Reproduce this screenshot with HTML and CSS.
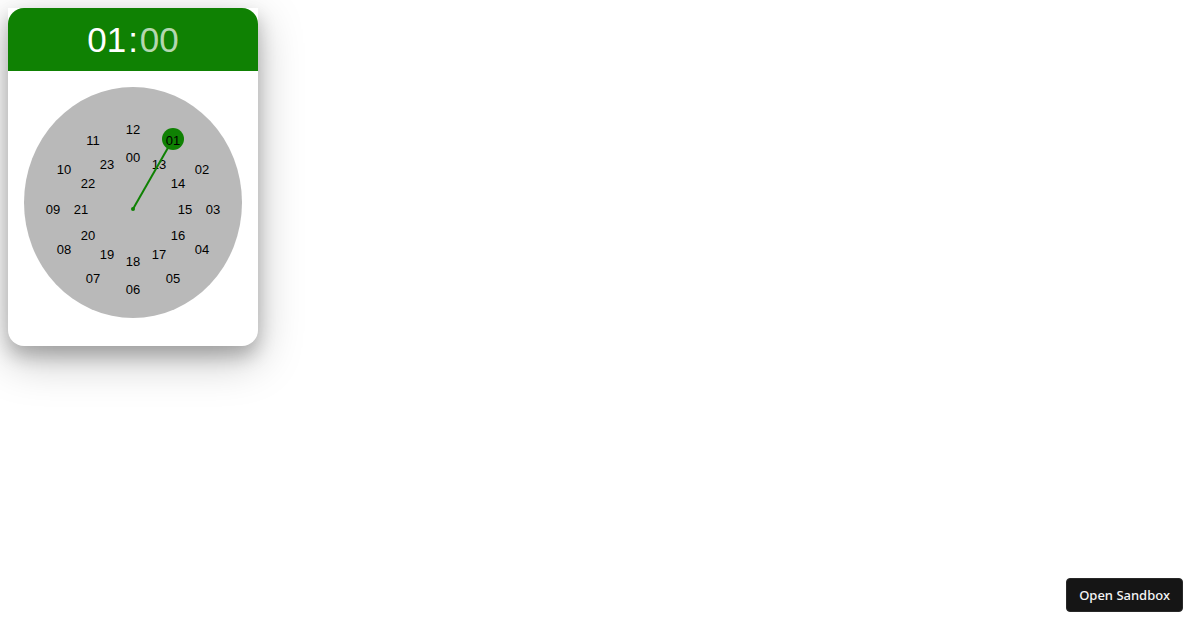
FILE: index.html
```html
<!DOCTYPE html>
<html lang="en">
<head>
<meta charset="utf-8">
<meta name="viewport" content="width=device-width, initial-scale=1">
<title>Time picker</title>
<link rel="stylesheet" href="styles.css">
</head>
<body>
<main class="picker">
  <header class="picker-header">
    <button class="unit" type="button" aria-label="Hours">01</button>
    <span class="colon">:</span>
    <button class="unit unit-idle" type="button" aria-label="Minutes">00</button>
  </header>
  <div class="picker-body">
    <svg class="clock" viewBox="0 0 218 231" role="img" aria-label="Hour dial, 01 selected">
      <ellipse class="face" cx="109" cy="115.5" rx="109" ry="115.5"/>
      <g class="numbers">
        <text x="109" y="47">12</text>
        <text x="178" y="87">02</text>
        <text x="189" y="127">03</text>
        <text x="178" y="167">04</text>
        <text x="149" y="196">05</text>
        <text x="109" y="207">06</text>
        <text x="69" y="196">07</text>
        <text x="40" y="167">08</text>
        <text x="29" y="127">09</text>
        <text x="40" y="87">10</text>
        <text x="69" y="58">11</text>
        <text x="109" y="75">00</text>
        <text x="135" y="82">13</text>
        <text x="154" y="101">14</text>
        <text x="161" y="127">15</text>
        <text x="154" y="153">16</text>
        <text x="135" y="172">17</text>
        <text x="109" y="179">18</text>
        <text x="83" y="172">19</text>
        <text x="64" y="153">20</text>
        <text x="57" y="127">21</text>
        <text x="64" y="101">22</text>
        <text x="83" y="82">23</text>
      </g>
      <line class="hand" x1="109" y1="122" x2="149" y2="52"/>
      <circle class="knob" cx="109" cy="122" r="2"/>
      <circle class="knob" cx="149" cy="52" r="11"/>
      <g class="numbers"><text x="149" y="58">01</text></g>
    </svg>
  </div>
</main>
<a class="sandbox" href="#">Open Sandbox</a>
</body>
</html>
```
FILE: styles.css
```css
* {
  box-sizing: border-box;
}

body {
  min-height: 100vh;
  margin: 0;
  padding: 8px;
  background: #fff;
  font-family: "Liberation Sans", Arial, sans-serif;
}

.picker {
  width: 250px;
  background: #fff;
  border-radius: 0 0 16px 16px;
  box-shadow: 0 14px 45px rgba(0, 0, 0, 0.25), 0 10px 18px rgba(0, 0, 0, 0.22);
}

.picker-header {
  display: flex;
  justify-content: center;
  gap: 2px;
  padding: 12px;
  border-radius: 16px 16px 0 0;
  background: #0f8103;
  color: #fff;
  font-size: 35px;
  line-height: 39px;
}

.unit {
  padding: 0;
  border: 0;
  background: none;
  color: inherit;
  font: inherit;
  cursor: pointer;
}

.unit-idle {
  color: rgba(255, 255, 255, 0.7);
}

.picker-body {
  padding: 16px 16px 28px;
}

.clock {
  display: block;
  width: 100%;
}

.face {
  fill: #b9b9b9;
}

.numbers {
  fill: #000;
  font-size: 13px;
  text-anchor: middle;
}

.hand {
  stroke: #0f8103;
  stroke-width: 2;
}

.knob {
  fill: #0f8103;
}

.sandbox {
  position: fixed;
  right: 17px;
  bottom: 18px;
  padding: 8px 12px;
  border: 1px solid #282828;
  border-radius: 4px;
  background: #151515;
  color: #f5f5f5;
  font: 500 13px/16px "Noto Sans", sans-serif;
  text-decoration: none;
}
```
